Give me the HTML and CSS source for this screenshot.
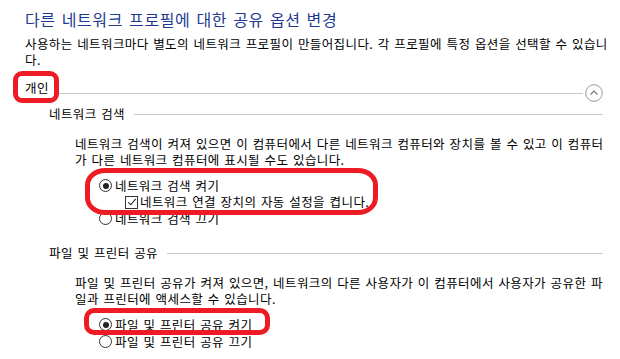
FILE: index.html
```html
<!DOCTYPE html>
<html lang="ko">
<head>
    <meta charset="UTF-8">
    <title>고급 공유 설정</title>
    <link rel="stylesheet" href="styles.css">
</head>
<body>

    <div class="page">
        <h1 class="title">다른 네트워크 프로필에 대한 공유 옵션 변경</h1>
        <p class="desc">사용하는 네트워크마다 별도의 네트워크 프로필이 만들어집니다. 각 프로필에 특정 옵션을 선택할 수 있습니<br>다.</p>

        <div class="group-head">
            <span class="group-name">개인</span>
            <span class="rule"></span>
            <span class="collapse">
                <svg width="18" height="18" viewBox="0 0 18 18">
                    <circle cx="9" cy="9" r="8.3" fill="none" stroke="#9a9a9a" stroke-width="1"/>
                    <path d="M5.5 10.5 L9 7 L12.5 10.5" fill="none" stroke="#707070" stroke-width="1.1"/>
                </svg>
            </span>
        </div>

        <div class="section">
            <div class="section-head">
                <span class="section-name">네트워크 검색</span>
                <span class="rule"></span>
            </div>
            <p class="para">네트워크 검색이 켜져 있으면 이 컴퓨터에서 다른 네트워크 컴퓨터와 장치를 볼 수 있고 이 컴퓨터<br>가 다른 네트워크 컴퓨터에 표시될 수도 있습니다.</p>
            <div class="options">
                <label class="opt"><span class="radio on"></span>네트워크 검색 켜기</label>
                <label class="opt sub"><span class="check"></span>네트워크 연결 장치의 자동 설정을 켭니다.</label>
                <label class="opt"><span class="radio"></span>네트워크 검색 끄기</label>
            </div>
        </div>

        <div class="section">
            <div class="section-head">
                <span class="section-name">파일 및 프린터 공유</span>
                <span class="rule"></span>
            </div>
            <p class="para">파일 및 프린터 공유가 켜져 있으면, 네트워크의 다른 사용자가 이 컴퓨터에서 사용자가 공유한 파<br>일과 프린터에 액세스할 수 있습니다.</p>
            <div class="options">
                <label class="opt"><span class="radio on"></span>파일 및 프린터 공유 켜기</label>
                <label class="opt"><span class="radio"></span>파일 및 프린터 공유 끄기</label>
            </div>
        </div>

        <!-- red marks drawn over the screenshot -->
        <div class="mark mark-group"></div>
        <div class="mark mark-discovery"></div>
        <div class="mark mark-sharing"></div>
    </div>

</body>
</html>
```

FILE: styles.css
```css
body {
    margin: 0;
    background-color: #fff;
    font-family: "Noto Sans CJK KR", "Noto Sans", sans-serif;
    color: #000;
}

.page {
    position: relative;
    padding: 9px 5px 0 25px;
}

.title {
    margin: 0;
    font-size: 16px;
    font-weight: normal;
    line-height: 20px;
    letter-spacing: 0.6px;
    word-spacing: 1px;
    color: #1e3991;
}

.desc, .para, .opt, .group-name, .section-name {
    font-size: 12.5px;
    line-height: 16px;
    letter-spacing: 0.4px;
    word-spacing: 0.7px;
}

.desc {
    margin: 7px 0 0;
}

.group-head {
    display: flex;
    align-items: center;
    margin: 12px 12px 0 0;
}

.group-name {
    padding-bottom: 10px;
}

.group-head .rule {
    flex: 1;
    margin: 0 2px 0 6px;
}

.rule {
    border-top: 1px solid #cbcbcb;
    height: 0;
}

.collapse svg {
    display: block;
}

.section {
    padding-left: 24px;
}

.section-head {
    display: flex;
    align-items: center;
    margin-right: 12px;
}

.section-head .rule {
    flex: 1;
    margin-left: 9px;
}

.section + .section .section-head {
    margin-top: 18px;
}

.para {
    margin: 14px 0 0;
    padding-left: 26px;
}

.options {
    margin-top: 9px;
    padding-left: 50px;
}

.opt {
    display: flex;
    align-items: center;
    height: 17px;
}

.opt.sub {
    height: 16px;
    padding-left: 26px;
}

.radio {
    box-sizing: border-box;
    width: 13px;
    height: 13px;
    border: 1px solid #333;
    border-radius: 50%;
    margin-right: 3px;
    position: relative;
    flex: none;
}

.radio.on::after {
    content: "";
    position: absolute;
    left: 2.5px;
    top: 2.5px;
    width: 6px;
    height: 6px;
    border-radius: 50%;
    background-color: #222;
}

.check {
    box-sizing: border-box;
    width: 13px;
    height: 13px;
    border: 1px solid #333;
    margin-right: 2px;
    position: relative;
    flex: none;
}

.check::after {
    content: "";
    position: absolute;
    left: 3.5px;
    top: 0.5px;
    width: 3px;
    height: 7px;
    border-right: 1.3px solid #222;
    border-bottom: 1.3px solid #222;
    transform: rotate(40deg);
}

.mark {
    position: absolute;
    box-sizing: border-box;
    border: 5px solid #ed1c24;
    border-radius: 9px;
}

.mark-group {
    left: 13px;
    top: 71px;
    width: 46px;
    height: 32px;
}

.mark-discovery {
    left: 85px;
    top: 168px;
    width: 293px;
    height: 47px;
    border-radius: 20px / 17px;
}

.mark-sharing {
    left: 84px;
    top: 308px;
    width: 186px;
    height: 27px;
    border-radius: 10px;
}
```
